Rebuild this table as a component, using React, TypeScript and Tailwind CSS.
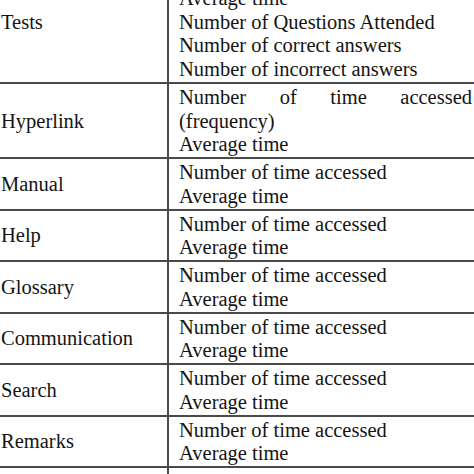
const rows: { name: string; items: string[]; justifyFirst?: boolean; lowered?: boolean }[] = [
    {
        name: "Tests",
        items: [
            "Number of Tests attempted",
            "Average time",
            "Number of Questions Attended",
            "Number of correct answers",
            "Number of incorrect answers",
        ],
    },
    {
        name: "Hyperlink",
        items: ["Number of time accessed", "(frequency)", "Average time"],
        justifyFirst: true,
    },
    { name: "Manual", items: ["Number of time accessed", "Average time"] },
    { name: "Help", items: ["Number of time accessed", "Average time"] },
    { name: "Glossary", items: ["Number of time accessed", "Average time"] },
    { name: "Communication", items: ["Number of time accessed", "Average time"] },
    { name: "Search", items: ["Number of time accessed", "Average time"] },
    { name: "Remarks", items: ["Number of time accessed", "Average time"] },
    { name: "Forum", items: ["Number of time accessed", "Average time"], lowered: true },
];

export default function App() {
    return (
        <div className="w-[474px] h-[474px] overflow-hidden bg-white text-[#141414] font-[family-name:'Liberation_Serif','Times_New_Roman',serif] text-[20.5px] leading-[23.75px]">
            <div className="-mt-[39px] flex flex-col">
                {rows.map((row) => (
                    <div key={row.name} className="grid grid-cols-[169px_1fr] border-b-2 border-[#4a4a4a]">
                        <div className="flex items-center border-r-2 border-[#4a4a4a] pl-[1px] pt-[2px]">
                            {row.name}
                        </div>
                        <div className={row.lowered ? "pt-[8px] pl-[10px] pr-[2px]" : "pt-[2px] pl-[10px] pr-[2px]"}>
                            {row.items.map((item, i) => (
                                <div
                                    key={i}
                                    className={i === 0 && row.justifyFirst ? "text-justify [text-align-last:justify]" : ""}
                                >
                                    {item}
                                </div>
                            ))}
                        </div>
                    </div>
                ))}
            </div>
        </div>
    );
}
